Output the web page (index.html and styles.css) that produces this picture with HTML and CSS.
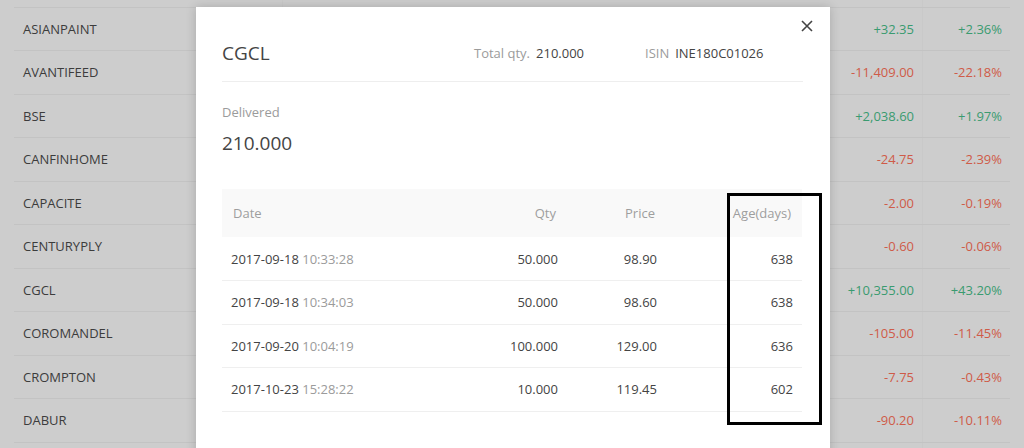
FILE: index.html
```html
<!DOCTYPE html>
<html>
<head>
<meta charset="utf-8">
<link rel="stylesheet" href="styles.css">
</head>
<body>
<div class="page">
  <div class="holdings">
    <div class="row row-top"><div></div><div></div><div></div><div></div></div>
    <div class="row"><div class="name">ASIANPAINT</div><div class="mid"></div><div class="num up">+32.35</div><div class="num pct up">+2.36%</div></div>
    <div class="row"><div class="name">AVANTIFEED</div><div class="mid"></div><div class="num down">-11,409.00</div><div class="num pct down">-22.18%</div></div>
    <div class="row"><div class="name">BSE</div><div class="mid"></div><div class="num up">+2,038.60</div><div class="num pct up">+1.97%</div></div>
    <div class="row"><div class="name">CANFINHOME</div><div class="mid"></div><div class="num down">-24.75</div><div class="num pct down">-2.39%</div></div>
    <div class="row"><div class="name">CAPACITE</div><div class="mid"></div><div class="num down">-2.00</div><div class="num pct down">-0.19%</div></div>
    <div class="row"><div class="name">CENTURYPLY</div><div class="mid"></div><div class="num down">-0.60</div><div class="num pct down">-0.06%</div></div>
    <div class="row"><div class="name">CGCL</div><div class="mid"></div><div class="num up">+10,355.00</div><div class="num pct up">+43.20%</div></div>
    <div class="row"><div class="name">COROMANDEL</div><div class="mid"></div><div class="num down">-105.00</div><div class="num pct down">-11.45%</div></div>
    <div class="row"><div class="name">CROMPTON</div><div class="mid"></div><div class="num down">-7.75</div><div class="num pct down">-0.43%</div></div>
    <div class="row"><div class="name">DABUR</div><div class="mid"></div><div class="num down">-90.20</div><div class="num pct down">-10.11%</div></div>
    <div class="row"><div></div><div></div><div></div><div></div></div>
  </div>

  <div class="modal">
    <button class="close" aria-label="Close">
      <svg width="12" height="12" viewBox="0 0 12 12"><path d="M1 1 L11 11 M11 1 L1 11" stroke="#444" stroke-width="1.6" fill="none"/></svg>
    </button>
    <div class="modal-head">
      <div class="title">CGCL</div>
      <div class="info"><span class="label">Total qty.</span><span class="value">210.000</span></div>
      <div class="info"><span class="label">ISIN</span><span class="value">INE180C01026</span></div>
    </div>
    <div class="delivered">
      <div class="label">Delivered</div>
      <div class="big">210.000</div>
    </div>
    <table class="trades">
      <colgroup>
        <col class="c-date"><col class="c-qty"><col class="c-price"><col class="c-age">
      </colgroup>
      <thead>
        <tr><th class="left">Date</th><th>Qty</th><th>Price</th><th>Age(days)</th></tr>
      </thead>
      <tbody>
        <tr><td class="left">2017-09-18 <span class="time">10:33:28</span></td><td>50.000</td><td>98.90</td><td>638</td></tr>
        <tr><td class="left">2017-09-18 <span class="time">10:34:03</span></td><td>50.000</td><td>98.60</td><td>638</td></tr>
        <tr><td class="left">2017-09-20 <span class="time">10:04:19</span></td><td>100.000</td><td>129.00</td><td>636</td></tr>
        <tr><td class="left">2017-10-23 <span class="time">15:28:22</span></td><td>10.000</td><td>119.45</td><td>602</td></tr>
      </tbody>
    </table>
  </div>

  <div class="highlight"></div>
</div>
</body>
</html>
```

FILE: styles.css
```css
* { box-sizing: border-box; }

html, body {
  margin: 0;
  padding: 0;
  background: #cdcdcd;
  font-family: "Open Sans", "Liberation Sans", sans-serif;
  font-size: 13px;
  color: #3c3c3c;
  overflow: hidden;
}

.page {
  position: relative;
  width: 1024px;
  height: 448px;
  overflow: hidden;
}

/* background holdings table */
.holdings {
  margin-left: 14px;
  width: 996px;
}

.row {
  display: grid;
  grid-template-columns: 269px 1fr 100px 87px;
  height: 43.5px;
  border-top: 1px solid #c3c3c3;
  align-items: center;
}

.row-top {
  height: 6.5px;
  border-top: none;
}

.row > div {
  height: 100%;
  display: flex;
  align-items: center;
  padding: 0 8px;
}

.row > div:nth-child(1) {
  border-right: 1px solid #c9c9c9;
  padding-left: 9px;
}

.row > div:nth-child(3) {
  border-right: 1px solid #c9c9c9;
}

.num {
  justify-content: flex-end;
}

.up { color: #3a9b70; }
.down { color: #cf5b48; }

/* modal */
.modal {
  position: absolute;
  left: 196px;
  top: 7px;
  width: 634px;
  height: 470px;
  background: #fff;
  box-shadow: 0 0 10px rgba(0, 0, 0, 0.18);
  padding: 32px 27px 0 26px;
}

.close {
  position: absolute;
  top: 13px;
  right: 17px;
  width: 12px;
  height: 12px;
  padding: 0;
  border: none;
  background: none;
  display: flex;
}

.modal-head {
  display: grid;
  grid-template-columns: 252px 171px auto;
  align-items: center;
  height: 43px;
  padding-bottom: 14px;
  border-bottom: 1px solid #eeeeee;
}

.title {
  font-size: 19px;
  line-height: 28px;
  color: #444;
}

.info {
  display: flex;
  gap: 6px;
  line-height: 20px;
}

.label {
  color: #9b9b9b;
}

.value {
  color: #444;
}

.delivered {
  padding-top: 20px;
}

.delivered .label {
  line-height: 20px;
}

.delivered .big {
  margin-top: 7px;
  font-size: 19px;
  line-height: 28px;
  color: #444;
}

/* trades table */
.trades {
  margin-top: 32px;
  width: 580px;
  border-collapse: collapse;
  table-layout: fixed;
}

.c-date { width: 238px; }
.c-qty { width: 107px; }
.c-price { width: 99px; }
.c-age { width: 136px; }

.trades thead tr {
  background: #f9f9f9;
  height: 48px;
}

.trades th {
  font-weight: normal;
  color: #9e9e9e;
  text-align: right;
  padding: 0 11px 0 10px;
}

.trades th.left {
  text-align: left;
  padding-left: 11px;
}

.trades tbody tr {
  height: 43.5px;
  border-bottom: 1px solid #efefef;
}

.trades td {
  text-align: right;
  padding: 0 9px 0 10px;
  color: #444;
}

.trades td.left {
  text-align: left;
  padding-left: 9px;
}

.time {
  color: #9b9b9b;
}

/* annotation box */
.highlight {
  position: absolute;
  left: 727px;
  top: 193px;
  width: 95px;
  height: 232px;
  border: 3px solid #000;
}
```
